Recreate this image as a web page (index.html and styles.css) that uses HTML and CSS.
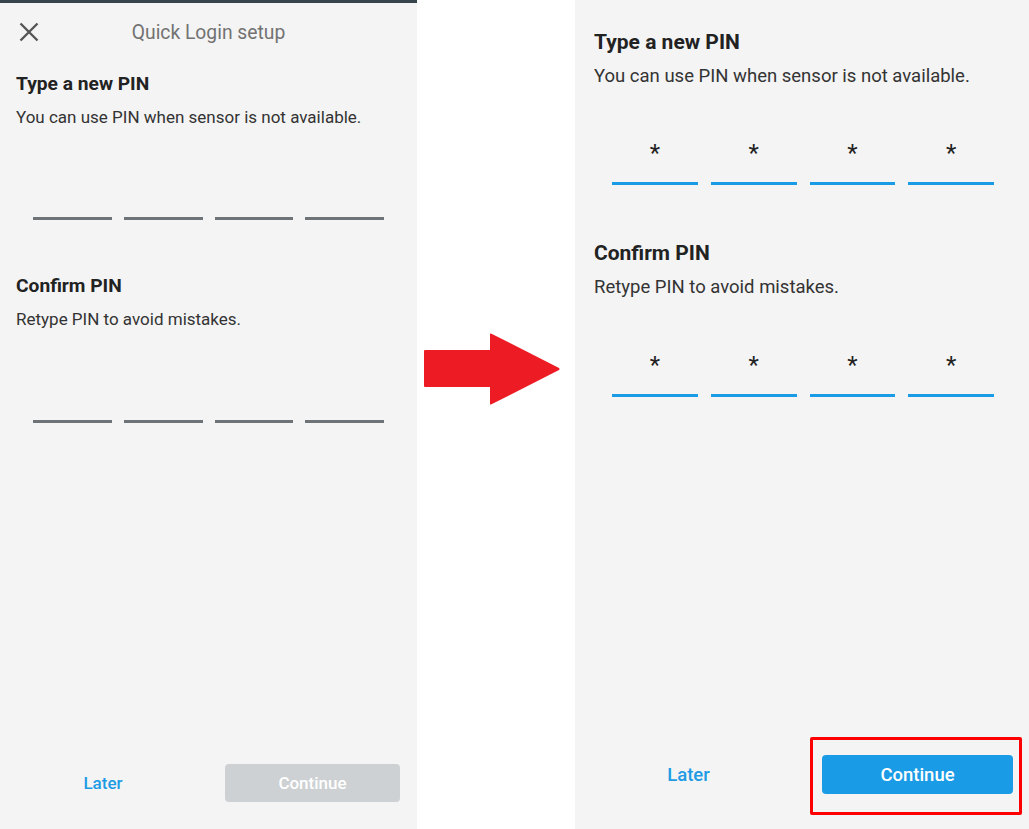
FILE: index.html
```html
<!DOCTYPE html>
<html lang="en">
    <head>
        <meta charset="UTF-8">
        <title>Quick Login setup</title>
        <link rel="stylesheet" href="styles.css">
    </head>
    <body>

        <!-- before: empty PIN -->
        <div class="phone phone-before">
            <div class="topbar">
                <svg class="close" width="20" height="20" viewBox="0 0 20 20">
                    <path d="M1.5 1.5 L18.5 18.5 M18.5 1.5 L1.5 18.5" stroke="#555" stroke-width="2.4" fill="none"/>
                </svg>
                <span class="title">Quick Login setup</span>
                <span></span>
            </div>

            <div class="section">
                <h2>Type a new PIN</h2>
                <p>You can use PIN when sensor is not available.</p>
                <div class="pins pins-first">
                    <span class="pin"></span><span class="pin"></span><span class="pin"></span><span class="pin"></span>
                </div>

                <h2 class="confirm">Confirm PIN</h2>
                <p>Retype PIN to avoid mistakes.</p>
                <div class="pins">
                    <span class="pin"></span><span class="pin"></span><span class="pin"></span><span class="pin"></span>
                </div>
            </div>

            <div class="footer">
                <button class="later">Later</button>
                <div class="continue-wrap">
                    <button class="continue" disabled>Continue</button>
                </div>
            </div>
        </div>

        <div class="arrow">
            <svg width="136" height="72" viewBox="0 0 136 72">
                <path d="M1 17 H66 V1 Q66 0 67.5 0.7 L135 35 Q136 36 135 37 L67.5 71.3 Q66 72 66 71 V54 H1 Q0 54 0 53 V18 Q0 17 1 17 Z" fill="#ed1c24"/>
            </svg>
        </div>

        <!-- after: PIN typed twice -->
        <div class="phone phone-after">
            <div class="section">
                <h2>Type a new PIN</h2>
                <p>You can use PIN when sensor is not available.</p>
                <div class="pins pins-first">
                    <span class="pin">*</span><span class="pin">*</span><span class="pin">*</span><span class="pin">*</span>
                </div>

                <h2 class="confirm">Confirm PIN</h2>
                <p>Retype PIN to avoid mistakes.</p>
                <div class="pins">
                    <span class="pin">*</span><span class="pin">*</span><span class="pin">*</span><span class="pin">*</span>
                </div>
            </div>

            <div class="footer">
                <button class="later">Later</button>
                <div class="continue-wrap">
                    <button class="continue">Continue</button>
                    <span class="highlight"></span>
                </div>
            </div>
        </div>

    </body>
</html>
```

FILE: styles.css
```css
body {
    margin: 0;
    display: flex;
    align-items: stretch;
    height: 829px;
    overflow: hidden;
    background-color: #ffffff;
    font-family: 'Roboto', 'Liberation Sans', sans-serif;
}
.phone {
    display: flex;
    flex-direction: column;
    background-color: #f4f4f4;
    box-sizing: border-box;
    height: 829px;
}
button {
    font-family: inherit;
    border: none;
    background: none;
    padding: 0;
}

/* left screenshot */
.phone-before {
    width: 417px;
    border-top: 3px solid #37444c;
}
.topbar {
    height: 58px;
    display: grid;
    grid-template-columns: 1fr auto 1fr;
    align-items: center;
    padding: 0 19px;
}
.close {
    display: block;
}
.title {
    font-size: 19.3px;
    color: #727272;
}
.section {
    padding: 0 16px;
}
.section h2 {
    margin: 11px 0 0;
    font-size: 19.2px;
    line-height: 24px;
    font-weight: 700;
    color: #222;
}
.section p {
    margin: 10px 0 0;
    font-size: 17px;
    line-height: 22px;
    color: #333;
}
.section h2.confirm {
    margin-top: 54px;
}
.pins {
    display: flex;
    gap: 12px;
    padding: 0 17px;
    margin-top: 53px;
}
.pins-first {
    margin-top: 52px;
}
.pin {
    flex: 1;
    height: 40px;
    box-sizing: border-box;
    border-bottom: 3px solid #6e7378;
}
.footer {
    margin-top: auto;
    display: flex;
    align-items: center;
    gap: 36px;
    padding: 0 17px 27px;
}
.later {
    flex: 1;
    text-align: center;
    font-size: 17px;
    font-weight: 500;
    color: #1e9be4;
    height: 38px;
}
.continue-wrap {
    position: relative;
    width: 175px;
}
.continue {
    display: block;
    width: 100%;
    height: 38px;
    border-radius: 4px;
    background-color: #cdd1d3;
    color: #ffffff;
    font-size: 17px;
    font-weight: 500;
}

.arrow {
    width: 158px;
    box-sizing: border-box;
    padding: 333px 0 0 7px;
}

/* right screenshot, slightly larger scale */
.phone-after {
    width: 454px;
}
.phone-after .section {
    padding: 29px 19px 0;
}
.phone-after .section h2 {
    margin-top: 0;
    font-size: 21px;
    line-height: 26px;
}
.phone-after .section p {
    margin-top: 9px;
    font-size: 18.5px;
    line-height: 24px;
}
.phone-after .section h2.confirm {
    margin-top: 55px;
}
.phone-after .pins {
    gap: 13px;
    padding: 0 16px 0 18px;
    margin-top: 52px;
}
.phone-after .pins-first {
    margin-top: 51px;
}
.phone-after .pin {
    height: 46px;
    border-bottom-color: #1a9be6;
    text-align: center;
    font-size: 24px;
    line-height: 29px;
    color: #222;
}
.phone-after .footer {
    gap: 36px;
    padding: 0 16px 35px;
}
.phone-after .later {
    font-size: 18.5px;
    height: 39px;
}
.phone-after .continue-wrap {
    width: 191px;
}
.phone-after .continue {
    height: 39px;
    background-color: #1a9be6;
    font-size: 18.5px;
}
.highlight {
    position: absolute;
    left: -12px;
    right: -9px;
    top: -18px;
    bottom: -21px;
    border: 3px solid #ff0000;
    border-radius: 2px;
}
```
